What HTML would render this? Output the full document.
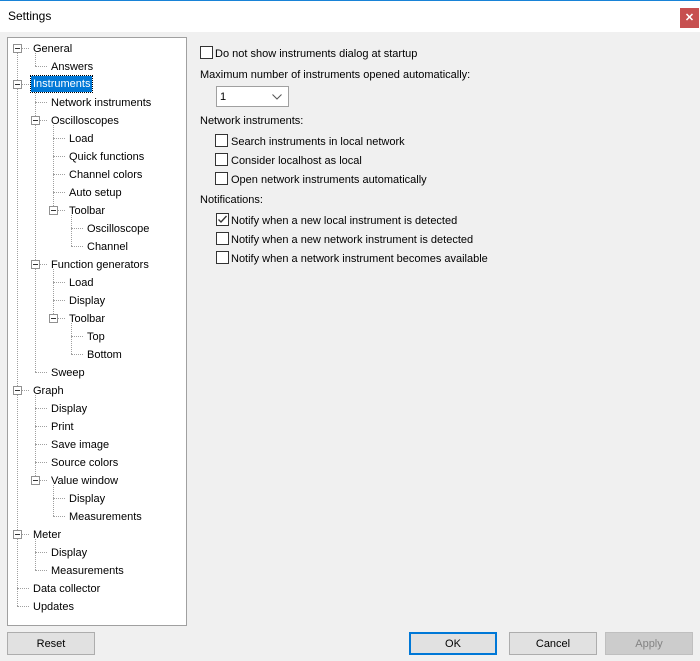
<!DOCTYPE html>
<html><head><meta charset="utf-8"><style>
*{margin:0;padding:0;box-sizing:border-box}
body{width:700px;height:661px;background:#f0f0f0;font-family:"Liberation Sans",sans-serif;font-size:11px;color:#000;position:relative;overflow:hidden}
.tb{position:absolute;left:0;top:0;width:700px;height:32px;background:#fff;border-top:1px solid #1883d7}
.tb .t{position:absolute;left:8px;top:8px;font-size:12px}
.cl{position:absolute;left:680px;top:7px;width:19px;height:20px;background:#c75050;color:#fff;font-size:11px;font-weight:bold;text-align:center;line-height:20px}
.tree{position:absolute;left:7px;top:37px;width:180px;height:589px;background:#fff;border:1px solid #a0a0a0}
.a{position:absolute;white-space:nowrap}
.r{position:absolute;white-space:nowrap;line-height:16px;height:16px;margin-top:1px}
.bx{position:absolute;width:9px;height:9px;border:1px solid #919191;background:#fff}
.bx:after{content:"";position:absolute;left:1px;top:3px;width:5px;height:1px;background:#333}
.h{position:absolute;height:0;border-top:1px dotted #a0a0a0}
.v{position:absolute;width:0;border-left:1px dotted #a0a0a0}
.sel{background:#0078d7;color:#fff;outline:1px dotted #000;padding:0 2px;margin-left:-2px}
.cb{position:absolute;width:13px;height:13px;border:1px solid #333;background:#fff}
.btn{position:absolute;height:23px;width:88px;background:#e1e1e1;border:1px solid #adadad;text-align:center;line-height:22px}
</style></head><body>
<div class="tb"><div class="t">Settings</div><div class="cl">✕</div></div>
<div class="tree"></div>
<div class="v" style="left:17px;top:48px;height:558px"></div>
<div class="v" style="left:35px;top:53px;height:13px"></div>
<div class="v" style="left:35px;top:89px;height:283px"></div>
<div class="v" style="left:53px;top:125px;height:85px"></div>
<div class="v" style="left:71px;top:215px;height:31px"></div>
<div class="v" style="left:53px;top:269px;height:49px"></div>
<div class="v" style="left:71px;top:323px;height:31px"></div>
<div class="v" style="left:35px;top:395px;height:85px"></div>
<div class="v" style="left:53px;top:485px;height:31px"></div>
<div class="v" style="left:35px;top:539px;height:31px"></div>
<div class="h" style="left:17px;top:48px;width:12px"></div><div class="bx" style="left:13px;top:44px"></div><div class="r" style="left:33px;top:40px">General</div>
<div class="h" style="left:35px;top:66px;width:12px"></div><div class="r" style="left:51px;top:58px">Answers</div>
<div class="h" style="left:17px;top:84px;width:12px"></div><div class="bx" style="left:13px;top:80px"></div><div class="r sel" style="left:33px;top:75px">Instruments</div>
<div class="h" style="left:35px;top:102px;width:12px"></div><div class="r" style="left:51px;top:94px">Network instruments</div>
<div class="h" style="left:35px;top:120px;width:12px"></div><div class="bx" style="left:31px;top:116px"></div><div class="r" style="left:51px;top:112px">Oscilloscopes</div>
<div class="h" style="left:53px;top:138px;width:12px"></div><div class="r" style="left:69px;top:130px">Load</div>
<div class="h" style="left:53px;top:156px;width:12px"></div><div class="r" style="left:69px;top:148px">Quick functions</div>
<div class="h" style="left:53px;top:174px;width:12px"></div><div class="r" style="left:69px;top:166px">Channel colors</div>
<div class="h" style="left:53px;top:192px;width:12px"></div><div class="r" style="left:69px;top:184px">Auto setup</div>
<div class="h" style="left:53px;top:210px;width:12px"></div><div class="bx" style="left:49px;top:206px"></div><div class="r" style="left:69px;top:202px">Toolbar</div>
<div class="h" style="left:71px;top:228px;width:12px"></div><div class="r" style="left:87px;top:220px">Oscilloscope</div>
<div class="h" style="left:71px;top:246px;width:12px"></div><div class="r" style="left:87px;top:238px">Channel</div>
<div class="h" style="left:35px;top:264px;width:12px"></div><div class="bx" style="left:31px;top:260px"></div><div class="r" style="left:51px;top:256px">Function generators</div>
<div class="h" style="left:53px;top:282px;width:12px"></div><div class="r" style="left:69px;top:274px">Load</div>
<div class="h" style="left:53px;top:300px;width:12px"></div><div class="r" style="left:69px;top:292px">Display</div>
<div class="h" style="left:53px;top:318px;width:12px"></div><div class="bx" style="left:49px;top:314px"></div><div class="r" style="left:69px;top:310px">Toolbar</div>
<div class="h" style="left:71px;top:336px;width:12px"></div><div class="r" style="left:87px;top:328px">Top</div>
<div class="h" style="left:71px;top:354px;width:12px"></div><div class="r" style="left:87px;top:346px">Bottom</div>
<div class="h" style="left:35px;top:372px;width:12px"></div><div class="r" style="left:51px;top:364px">Sweep</div>
<div class="h" style="left:17px;top:390px;width:12px"></div><div class="bx" style="left:13px;top:386px"></div><div class="r" style="left:33px;top:382px">Graph</div>
<div class="h" style="left:35px;top:408px;width:12px"></div><div class="r" style="left:51px;top:400px">Display</div>
<div class="h" style="left:35px;top:426px;width:12px"></div><div class="r" style="left:51px;top:418px">Print</div>
<div class="h" style="left:35px;top:444px;width:12px"></div><div class="r" style="left:51px;top:436px">Save image</div>
<div class="h" style="left:35px;top:462px;width:12px"></div><div class="r" style="left:51px;top:454px">Source colors</div>
<div class="h" style="left:35px;top:480px;width:12px"></div><div class="bx" style="left:31px;top:476px"></div><div class="r" style="left:51px;top:472px">Value window</div>
<div class="h" style="left:53px;top:498px;width:12px"></div><div class="r" style="left:69px;top:490px">Display</div>
<div class="h" style="left:53px;top:516px;width:12px"></div><div class="r" style="left:69px;top:508px">Measurements</div>
<div class="h" style="left:17px;top:534px;width:12px"></div><div class="bx" style="left:13px;top:530px"></div><div class="r" style="left:33px;top:526px">Meter</div>
<div class="h" style="left:35px;top:552px;width:12px"></div><div class="r" style="left:51px;top:544px">Display</div>
<div class="h" style="left:35px;top:570px;width:12px"></div><div class="r" style="left:51px;top:562px">Measurements</div>
<div class="h" style="left:17px;top:588px;width:12px"></div><div class="r" style="left:33px;top:580px">Data collector</div>
<div class="h" style="left:17px;top:606px;width:12px"></div><div class="r" style="left:33px;top:598px">Updates</div>

<div class="cb" style="left:200px;top:46px"></div><div class="r" style="left:215px;top:45px">Do not show instruments dialog at startup</div>
<div class="r" style="left:200px;top:66px">Maximum number of instruments opened automatically:</div>
<div class="a" style="left:216px;top:86px;width:73px;height:21px;border:1px solid #a0a0a0;background:#fff"><span style="position:absolute;left:3px;top:4px">1</span>
<svg style="position:absolute;left:55px;top:7px" width="10" height="6"><path d="M0.5 0.5 L5 5 L9.5 0.5" fill="none" stroke="#555" stroke-width="1"/></svg></div>
<div class="r" style="left:200px;top:112px">Network instruments:</div>
<div class="cb" style="left:215px;top:134px"></div><div class="r" style="left:231px;top:133px">Search instruments in local network</div>
<div class="cb" style="left:215px;top:153px"></div><div class="r" style="left:231px;top:152px">Consider localhost as local</div>
<div class="cb" style="left:215px;top:172px"></div><div class="r" style="left:231px;top:171px">Open network instruments automatically</div>
<div class="r" style="left:200px;top:191px">Notifications:</div>
<div class="cb" style="left:216px;top:213px"><svg width="11" height="11" style="position:absolute;left:0;top:0"><path d="M1.5 5.5 L4 8 L9.5 2" fill="none" stroke="#333" stroke-width="1.3"/></svg></div><div class="r" style="left:231px;top:212px">Notify when a new local instrument is detected</div>
<div class="cb" style="left:216px;top:232px"></div><div class="r" style="left:231px;top:231px">Notify when a new network instrument is detected</div>
<div class="cb" style="left:216px;top:251px"></div><div class="r" style="left:231px;top:250px">Notify when a network instrument becomes available</div>

<div class="btn" style="left:7px;top:632px">Reset</div>
<div class="btn" style="left:409px;top:632px;border:2px solid #0078d7;line-height:20px">OK</div>
<div class="btn" style="left:509px;top:632px">Cancel</div>
<div class="btn" style="left:605px;top:632px;background:#ccc;border-color:#bfbfbf;color:#838383">Apply</div>
</body></html>
